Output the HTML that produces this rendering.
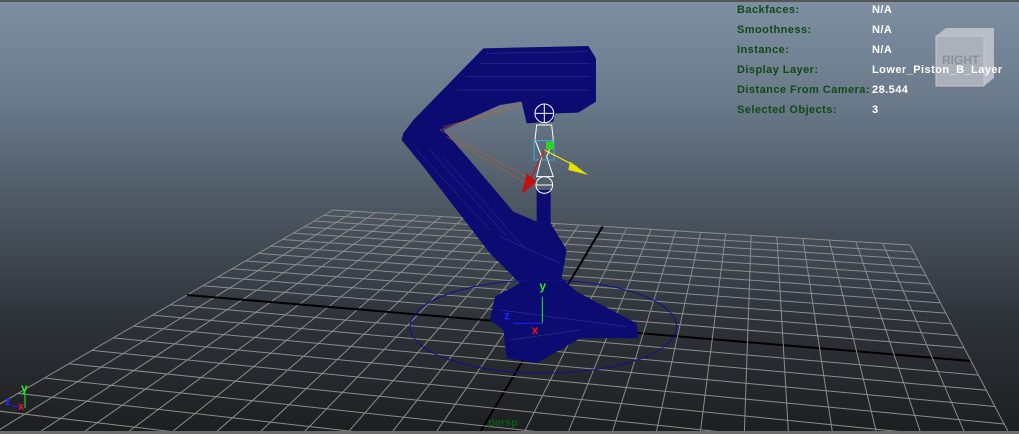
<!DOCTYPE html>
<html><head><meta charset="utf-8">
<style>
html,body{margin:0;padding:0;}
body{width:1019px;height:434px;overflow:hidden;position:relative;
background:linear-gradient(to bottom,#7e8fa2 0px,#6a7a8b 100px,#4c5661 210px,#2e3339 320px,#1d1e20 434px);
font-family:"Liberation Sans",sans-serif;}
#top{position:absolute;left:0;top:0;width:1019px;height:2px;background:#555;}
#bot{position:absolute;left:0;top:431px;width:1019px;height:3px;background:#6e6e6e;}
svg{position:absolute;left:0;top:0;overflow:hidden;}
.hud{position:absolute;font-size:11px;font-weight:bold;line-height:20px;letter-spacing:0.45px;}
.lab{left:737px;top:0;color:#0e4a12;}
.val{left:872px;top:0;color:#fff;}
</style></head><body>
<div id="top"></div>
<svg id="grid" width="1019" height="434"></svg>
<svg width="1019" height="434">
 <g transform="translate(380,30) scale(0.3333)">
  <polygon fill="#0b0b72" points="310,55 625,48 648,85 648,215 595,248 525,250 520,275 440,280 425,215 360,225 190,300 260,380 400,545 470,575 470,480 512,480 512,580 560,660 545,745 590,785 770,880 775,925 600,925 470,1000 380,985 370,900 330,870 345,800 420,760 330,670 130,410 65,330 70,310 100,270"/>
  <g stroke="#5a5ab0" stroke-width="1.5" fill="none" opacity="0.6">
   <line x1="320" y1="70" x2="620" y2="65"/><line x1="300" y1="100" x2="630" y2="100"/><line x1="260" y1="140" x2="630" y2="140"/><line x1="230" y1="180" x2="630" y2="180"/>
   <line x1="110" y1="360" x2="330" y2="600"/><line x1="150" y1="360" x2="380" y2="620"/><line x1="190" y1="380" x2="430" y2="650"/><line x1="360" y1="620" x2="540" y2="700"/>
   <line x1="360" y1="840" x2="740" y2="890"/><line x1="390" y1="930" x2="600" y2="900"/>
  </g>
  <g stroke="#c0602a" stroke-width="2" fill="none" opacity="0.8">
   <line x1="180" y1="300" x2="420" y2="215"/><line x1="180" y1="300" x2="440" y2="440"/><line x1="200" y1="320" x2="440" y2="460"/><line x1="190" y1="290" x2="420" y2="230"/>
  </g>
  <ellipse cx="490" cy="890" rx="400" ry="140" fill="none" stroke="#10108a" stroke-width="3"/>
  <g stroke="#fff" stroke-width="3" fill="none">
   <circle cx="493" cy="250" r="28"/><line x1="465" y1="250" x2="521" y2="250"/><line x1="493" y1="222" x2="493" y2="278"/>
   <path d="M470 285 L515 285 L520 330 L500 380 L520 440 L470 440 L485 380 L465 330 Z"/>
   <circle cx="493" cy="465" r="25"/><line x1="468" y1="465" x2="518" y2="465"/>
  </g>
  <rect x="462" y="332" width="60" height="58" fill="none" stroke="#3ab0d8" stroke-width="3"/>
  <rect x="498" y="335" width="24" height="24" fill="#2ed02e"/>
  <line x1="493" y1="360" x2="590" y2="410" stroke="#ffff00" stroke-width="3"/>
  <polygon points="570,395 625,435 565,420" fill="#e6e000"/>
  <line x1="493" y1="360" x2="450" y2="450" stroke="#d01010" stroke-width="3"/>
  <polygon points="440,430 470,455 425,492" fill="#c01010"/>
  <line x1="487" y1="800" x2="487" y2="880" stroke="#22ee22" stroke-width="3"/>
  <line x1="400" y1="880" x2="487" y2="880" stroke="#2222ff" stroke-width="3"/>
  <text x="478" y="780" fill="#22ee22" font-size="36" font-weight="bold" font-family="Liberation Sans">y</text>
  <text x="372" y="868" fill="#2222ff" font-size="36" font-weight="bold" font-family="Liberation Sans">z</text>
  <text x="455" y="912" fill="#ee1111" font-size="36" font-weight="bold" font-family="Liberation Sans">x</text>
 </g>
 <polygon points="936,36 946,28 994,28 994,78 984,86 936,86" fill="#b8bec6"/>
 <polygon points="936,36 984,36 984,86 936,86" fill="#aab1ba" stroke="#c8ccd2" stroke-width="1"/>
 <text x="942" y="64" font-size="12" font-weight="bold" fill="#8a9098" font-family="Liberation Sans">RIGHT</text>
 <line x1="25" y1="393" x2="25" y2="408" stroke="#22ee22" stroke-width="1"/>
 <line x1="12" y1="406" x2="25" y2="408" stroke="#2222ff" stroke-width="1"/>
 <text x="21" y="392" fill="#22ee22" font-size="12" font-weight="bold">y</text>
 <text x="5" y="405" fill="#2222ff" font-size="12" font-weight="bold">z</text>
 <text x="18" y="410" fill="#ee1111" font-size="11" font-weight="bold">x</text>
 <text x="488" y="426" fill="#0a5a1a" font-size="11" font-weight="bold">persp</text>
</svg>
<div class="hud lab">Backfaces:<br>Smoothness:<br>Instance:<br>Display Layer:<br>Distance From Camera:<br>Selected Objects:</div>
<div class="hud val">N/A<br>N/A<br>N/A<br>Lower_Piston_B_Layer<br>28.544<br>3</div>
<div id="bot"></div>
<script>
(function(){
 var src=[[-1,-1],[1,-1],[-1,0],[1,0]], dst=[[333,210],[910,245],[187,295],[971,361]];
 var A=[],b=[];
 for(var i=0;i<4;i++){var u=src[i][0],v=src[i][1],x=dst[i][0],y=dst[i][1];
  A.push([u,v,1,0,0,0,-u*x,-v*x]);b.push(x);
  A.push([0,0,0,u,v,1,-u*y,-v*y]);b.push(y);}
 var n=8;for(var c=0;c<n;c++){var p=c;for(var r=c+1;r<n;r++)if(Math.abs(A[r][c])>Math.abs(A[p][c]))p=r;
  var t=A[c];A[c]=A[p];A[p]=t;t=b[c];b[c]=b[p];b[p]=t;
  for(var r=0;r<n;r++){if(r==c)continue;var f=A[r][c]/A[c][c];for(var k=c;k<n;k++)A[r][k]-=f*A[c][k];b[r]-=f*b[c];}}
 var h=[];for(var i=0;i<n;i++)h.push(b[i]/A[i][i]);
 function P(u,v){var w=h[6]*u+h[7]*v+1;return [(h[0]*u+h[1]*v+h[2])/w,(h[3]*u+h[4]*v+h[5])/w];}
 var s='',N=12;
 for(var i=-N;i<=N;i++){var u=i/N;
  var a=P(u,-1),c2=P(u,1);var col=i==0?'#000':'#8c8c8c',sw=i==0?2:1;
  s+='<line x1="'+a[0]+'" y1="'+a[1]+'" x2="'+c2[0]+'" y2="'+c2[1]+'" stroke="'+col+'" stroke-width="'+sw+'"/>';
  var v=i/N;a=P(-1,v);c2=P(1,v);
  s+='<line x1="'+a[0]+'" y1="'+a[1]+'" x2="'+c2[0]+'" y2="'+c2[1]+'" stroke="'+col+'" stroke-width="'+sw+'"/>';}
 document.getElementById('grid').innerHTML=s;
})();
</script>
</body></html>
